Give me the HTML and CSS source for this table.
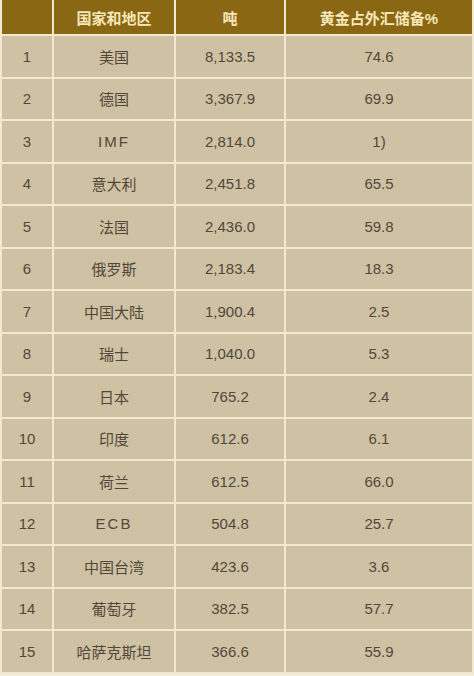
FILE: index.html
```html
<!DOCTYPE html>
<html lang="zh">
<head>
<meta charset="utf-8">
<link rel="stylesheet" href="styles.css">
</head>
<body>
<table class="gold">
<colgroup><col class="c1"><col class="c2"><col class="c3"><col class="c4"></colgroup>
<thead>
<tr><th></th><th>国家和地区</th><th>吨</th><th>黄金占外汇储备%</th></tr>
</thead>
<tbody>
<tr><td>1</td><td>美国</td><td>8,133.5</td><td>74.6</td></tr>
<tr><td>2</td><td>德国</td><td>3,367.9</td><td>69.9</td></tr>
<tr><td>3</td><td class="sp">IMF</td><td>2,814.0</td><td>1)</td></tr>
<tr><td>4</td><td>意大利</td><td>2,451.8</td><td>65.5</td></tr>
<tr><td>5</td><td>法国</td><td>2,436.0</td><td>59.8</td></tr>
<tr><td>6</td><td>俄罗斯</td><td>2,183.4</td><td>18.3</td></tr>
<tr><td>7</td><td>中国大陆</td><td>1,900.4</td><td>2.5</td></tr>
<tr><td>8</td><td>瑞士</td><td>1,040.0</td><td>5.3</td></tr>
<tr><td>9</td><td>日本</td><td>765.2</td><td>2.4</td></tr>
<tr><td>10</td><td>印度</td><td>612.6</td><td>6.1</td></tr>
<tr><td>11</td><td>荷兰</td><td>612.5</td><td>66.0</td></tr>
<tr><td>12</td><td class="sp">ECB</td><td>504.8</td><td>25.7</td></tr>
<tr><td>13</td><td>中国台湾</td><td>423.6</td><td>3.6</td></tr>
<tr><td>14</td><td>葡萄牙</td><td>382.5</td><td>57.7</td></tr>
<tr><td>15</td><td>哈萨克斯坦</td><td>366.6</td><td>55.9</td></tr>
</tbody>
</table>
</body>
</html>
```
FILE: styles.css
```css
html, body {
  margin: 0;
  padding: 0;
  background: #f6eedc;
}
body {
  font-family: "Liberation Sans", Arial, "Noto Sans CJK SC", sans-serif;
}
.gold {
  border-collapse: separate;
  border-spacing: 2px;
  margin: -2px 0 0 0;
  table-layout: fixed;
  width: 474px;
  background: #f3e8d0;
}
.c1 { width: 50px; }
.c2 { width: 120px; }
.c3 { width: 108px; }
.c4 { width: 186px; }
.gold th {
  background: #8a6712;
  color: #f6e8ba;
  font-weight: bold;
  font-size: 15px;
  height: 34px;
  padding: 0;
  text-align: center;
  vertical-align: middle;
}
.gold td {
  background: #cfc1a4;
  color: #524839;
  font-size: 15px;
  height: 40.5px;
  padding: 0;
  text-align: center;
  vertical-align: middle;
}
.gold td.sp {
  letter-spacing: 2px;
}
```
